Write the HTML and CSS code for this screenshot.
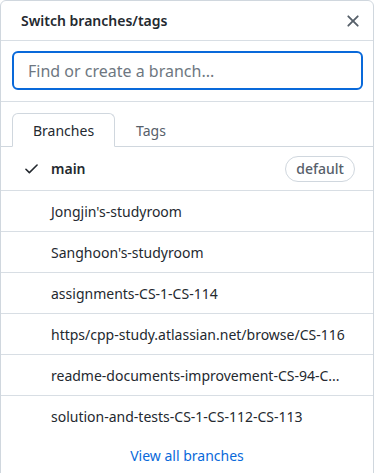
FILE: index.html
```html
<!DOCTYPE html>
<html lang="en">
<head>
    <meta charset="UTF-8">
    <meta name="viewport" content="width=device-width, initial-scale=1.0">
    <title>Switch branches/tags</title>
    <link rel="stylesheet" href="styles.css">
</head>
<body>

    <div class="menu">
        <div class="menu-header">
            <span class="menu-title">Switch branches/tags</span>
            <button class="close-btn" aria-label="Close">
                <svg width="20" height="20" viewBox="0 0 16 16"><path d="M3.72 3.72a.75.75 0 0 1 1.06 0L8 6.94l3.22-3.22a.75.75 0 1 1 1.06 1.06L9.06 8l3.22 3.22a.75.75 0 1 1-1.06 1.06L8 9.06l-3.22 3.22a.75.75 0 0 1-1.06-1.06L6.94 8 3.72 4.78a.75.75 0 0 1 0-1.06Z"></path></svg>
            </button>
        </div>

        <div class="filter">
            <input class="filter-input" type="text" placeholder="Find or create a branch..." autofocus>
        </div>

        <div class="tabs">
            <button class="tab selected">Branches</button>
            <button class="tab">Tags</button>
        </div>

        <ul class="branch-list">
            <li class="branch current">
                <svg class="check" width="17" height="17" viewBox="0 0 16 16"><path d="M13.78 4.22a.75.75 0 0 1 0 1.06l-7.25 7.25a.75.75 0 0 1-1.06 0L2.22 9.28a.75.75 0 0 1 1.06-1.06L6 10.94l6.72-6.72a.75.75 0 0 1 1.06 0Z"></path></svg>
                <span class="branch-name">main</span>
                <span class="label">default</span>
            </li>
            <li class="branch"><span class="branch-name">Jongjin's-studyroom</span></li>
            <li class="branch"><span class="branch-name">Sanghoon's-studyroom</span></li>
            <li class="branch"><span class="branch-name">assignments-CS-1-CS-114</span></li>
            <li class="branch"><span class="branch-name">https/cpp-study.atlassian.net/browse/CS-116</span></li>
            <li class="branch"><span class="branch-name">readme-documents-improvement-CS-94-C...</span></li>
            <li class="branch last"><span class="branch-name">solution-and-tests-CS-1-CS-112-CS-113</span></li>
        </ul>

        <div class="menu-footer">
            <a href="#" class="view-all">View all branches</a>
        </div>
    </div>

</body>
</html>
```

FILE: styles.css
```css
body {
    font-family: 'Noto Sans', 'Open Sans', sans-serif;
    background-color: #fff;
    margin: 0;
    color: #24292f;
}

.menu {
    width: 372px;
    height: 480px;
    border: 1px solid #d0d7de;
    border-radius: 6px;
    background-color: #fff;
    overflow: hidden;
}

.menu-header {
    display: flex;
    align-items: center;
    justify-content: space-between;
    height: 39px;
    padding: 0 6px 0 20px;
    border-bottom: 1px solid #d8dee4;
}

.menu-title {
    font-size: 14px;
    font-weight: 600;
}

.close-btn {
    border: none;
    background: none;
    padding: 4px;
    display: flex;
    fill: #57606a;
    cursor: pointer;
}

.filter {
    padding: 10px 10px 11px 11px;
    border-bottom: 1px solid #d8dee4;
}

.filter-input {
    width: 100%;
    height: 39px;
    box-sizing: border-box;
    padding: 0 14px;
    font-family: inherit;
    font-size: 16px;
    color: #24292f;
    border: 2px solid #0969da;
    border-radius: 6px;
    outline: none;
}

.filter-input::placeholder {
    color: #6e7781;
}

.tabs {
    display: flex;
    padding: 11px 0 0 11px;
    border-bottom: 1px solid #d0d7de;
}

.tab {
    font-family: inherit;
    font-size: 14px;
    color: #57606a;
    background: none;
    border: 1px solid transparent;
    border-radius: 6px 6px 0 0;
    height: 34px;
    padding: 0 20px;
    margin-bottom: -1px;
    cursor: pointer;
}

.tab.selected {
    color: #24292f;
    background-color: #fff;
    border-color: #d0d7de;
    border-bottom-color: #fff;
}

.branch-list {
    list-style: none;
    margin: 0;
    padding: 0;
}

.branch {
    display: flex;
    align-items: center;
    height: 40px;
    padding: 0 18px 0 50px;
    font-size: 14px;
    border-bottom: 1px solid #d8dee4;
    position: relative;
}

.branch.current {
    height: 43px;
}

.branch.last {
    border-bottom: none;
}

.branch-name {
    flex: 1;
    white-space: nowrap;
}

.current .branch-name {
    font-weight: 600;
}

.check {
    position: absolute;
    left: 22px;
    fill: #24292f;
}

.label {
    font-size: 14px;
    font-weight: 500;
    color: #57606a;
    border: 1px solid #d0d7de;
    border-radius: 2em;
    padding: 2px 10px 3px;
    margin-left: 8px;
}

.menu-footer {
    text-align: center;
    padding: 8px 0;
}

.view-all {
    font-size: 14px;
    color: #0969da;
    text-decoration: none;
}
```
